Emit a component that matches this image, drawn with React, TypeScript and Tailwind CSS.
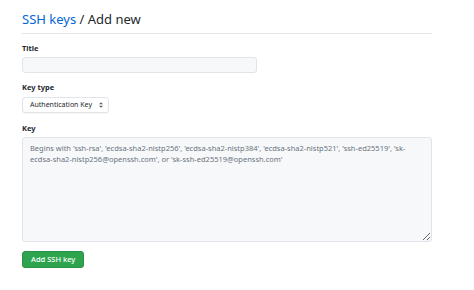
export default function App() {
  return (
    <div className="min-h-screen w-full bg-white" style={{ fontFamily: '"Noto Sans", "Open Sans", sans-serif' }}>
      <div className="pl-[22px] pr-[42px] pt-[10px]">
        <div className="border-b border-[#e1e4e8] pb-[5px]">
          <h1 className="text-[13px] leading-[18px] text-[#24292e]">
            <a href="#" className="text-[#0366d6]">SSH keys</a> / Add new
          </h1>
        </div>

        <div className="mt-[8px]">
          <label className="block text-[7.5px] font-bold leading-[12px] text-[#24292e]">Title</label>
          <input
            type="text"
            className="mt-[3px] block h-[16px] w-[235px] rounded-[3px] border border-[#e1e4e8] bg-[#f6f8fa] px-[4px] text-[8px] outline-none"
          />
        </div>

        <div className="mt-[8px]">
          <label className="block text-[7.5px] font-bold leading-[12px] text-[#24292e]">Key type</label>
          <div className="mt-[4px] flex h-[16px] w-[87px] items-center justify-between rounded-[3px] border border-[#e1e4e8] bg-white pl-[7px] pr-[5px] shadow-[0_1px_0_rgba(27,31,35,0.04)]">
            <span className="text-[7px] text-[#24292e]">Authentication Key</span>
            <svg width="4" height="6" viewBox="0 0 5 7" fill="#586069">
              <path d="M2.5 0 L5 2.6 H0 Z" />
              <path d="M2.5 7 L5 4.4 H0 Z" />
            </svg>
          </div>
        </div>

        <div className="mt-[9px]">
          <label className="block text-[7.5px] font-bold leading-[12px] text-[#24292e]">Key</label>
          <textarea
            className="mt-[3px] block h-[105px] w-full rounded-[3px] border border-[#e1e4e8] bg-[#f6f8fa] px-[7px] py-[5px] text-[7.5px] leading-[11px] text-[#24292e] outline-none placeholder:text-[#6a737d]"
            placeholder="Begins with 'ssh-rsa', 'ecdsa-sha2-nistp256', 'ecdsa-sha2-nistp384', 'ecdsa-sha2-nistp521', 'ssh-ed25519', 'sk-ecdsa-sha2-nistp256@openssh.com', or 'sk-ssh-ed25519@openssh.com'"
          />
        </div>

        <button className="mt-[9px] h-[17px] rounded-[3px] border border-[#2a9147] bg-[#2ea44f] px-[8px] text-[7.5px] font-medium text-white">
          Add SSH key
        </button>
      </div>
    </div>
  );
}
